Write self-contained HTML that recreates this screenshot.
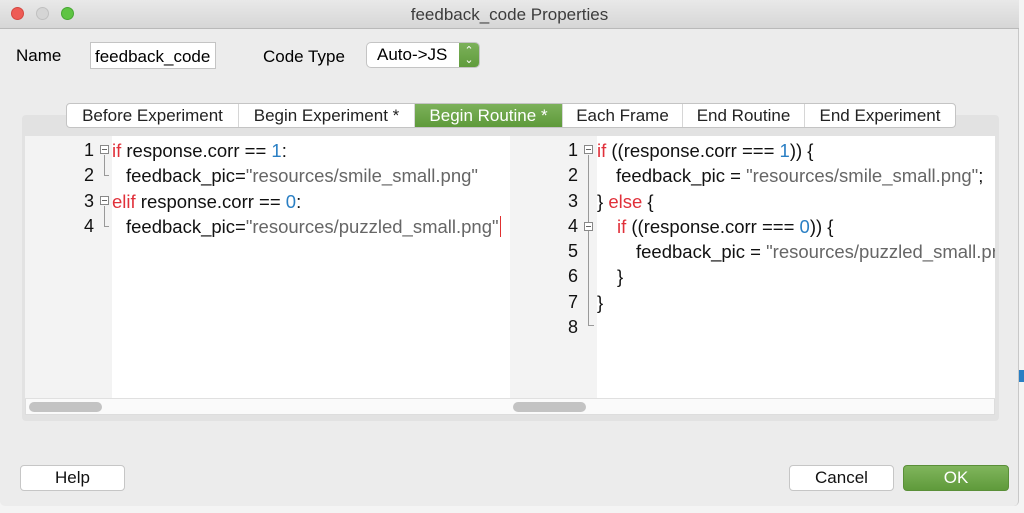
<!DOCTYPE html>
<html><head><meta charset="utf-8"><style>
*{margin:0;padding:0;box-sizing:border-box}
body{width:1024px;height:513px;overflow:hidden;background:#f4f4f4;font-family:"Liberation Sans",sans-serif;position:relative}
.win{position:absolute;left:0;top:0;width:1019px;height:506px;background:#ececec;border-radius:0 0 5px 5px;border-right:1px solid #c8c8c8}
.title{position:absolute;left:0;top:0;width:1019px;height:29px;background:linear-gradient(#e9e9e9,#d6d6d6);border-bottom:1px solid #b9b9b9;text-align:center;font-size:17px;line-height:30px;color:#3c3c3c}
.dot{position:absolute;top:7px;width:13px;height:13px;border-radius:50%}
.a{position:absolute;white-space:pre}
.tabs{position:absolute;left:66px;top:103px;height:25px;display:flex;border:1px solid #c4c4c4;border-radius:4px;background:#fff;overflow:hidden}
.tabs div{font-size:17px;line-height:23px;text-align:center;border-right:1px solid #d6d6d6;color:#222;flex:none}
.tabs div.on{background:linear-gradient(#7cb15a,#5e9a3a);color:#fff}
.code{position:absolute;white-space:nowrap;font-size:18.5px;line-height:25.3px;color:#111}
.code div{height:25.3px}
.k{color:#e0303a}.n{color:#2a7fc4}.s{color:#666}
.ln{position:absolute;font-size:18px;line-height:25.3px;text-align:right;width:20px;color:#111}
.btn{position:absolute;height:26px;background:#fff;border:1px solid #c6c6c6;border-radius:4px;font-size:17px;text-align:center;line-height:24px;color:#111}
.fold{position:absolute;width:9px;height:9px;border:1px solid #888;background:#fff}
.fold:after{content:"";position:absolute;left:1px;top:3px;width:5px;height:1px;background:#666}
.vl{position:absolute;width:1px;background:#999}
.hl{position:absolute;height:1px;background:#999}
</style></head><body>
<div class="win">
<div class="title">feedback_code Properties</div>
<div class="dot" style="left:11px;background:#ee5b55;border:1px solid #d44740"></div>
<div class="dot" style="left:36px;background:#d5d5d5;border:1px solid #c0c0c0"></div>
<div class="dot" style="left:61px;background:#5ec443;border:1px solid #47a733"></div>
<div class="a" style="left:16px;top:46px;font-size:17px">Name</div>
<div class="a" style="left:90px;top:42px;width:126px;height:27px;background:#fff;border:1px solid #c4c4c4;font-size:17px;line-height:27px;padding-left:4px;overflow:hidden">feedback_code</div>
<div class="a" style="left:263px;top:47px;font-size:17px">Code Type</div>
<div class="a" style="left:366px;top:42px;width:114px;height:26px;background:#fff;border:1px solid #c4c4c4;border-radius:5px;font-size:17px;line-height:24px;padding-left:10px;overflow:hidden">Auto-&gt;JS<div style="position:absolute;right:0;top:0;width:20px;height:26px;background:linear-gradient(#7cb15a,#5e9a3a);color:#fff;font-size:11px;line-height:9px;text-align:center;padding-top:4px">&#8963;<br>&#8964;</div></div>
<div style="position:absolute;left:22px;top:115px;width:977px;height:306px;background:#e2e2e2;border-radius:4px"></div>
<div style="position:absolute;left:25px;top:136px;width:970px;height:279px;background:#fafafa;border:1px solid #ddd"></div>
<div style="position:absolute;left:25px;top:136px;width:87px;height:262px;background:#f3f3f3"></div>
<div style="position:absolute;left:112px;top:136px;width:398px;height:262px;background:#fff"></div>
<div style="position:absolute;left:510px;top:136px;width:87px;height:262px;background:#f3f3f3"></div>
<div style="position:absolute;left:597px;top:136px;width:398px;height:262px;background:#fff"></div>
<div style="position:absolute;left:25px;top:398px;width:970px;height:1px;background:#e0e0e0"></div>
<div style="position:absolute;left:29px;top:402px;width:73px;height:10px;border-radius:5px;background:#c3c3c3"></div>
<div style="position:absolute;left:513px;top:402px;width:73px;height:10px;border-radius:5px;background:#c3c3c3"></div>
<div class="tabs"><div style="width:172px">Before Experiment</div><div style="width:176px">Begin Experiment *</div><div class="on" style="width:148px">Begin Routine *</div><div style="width:120px">Each Frame</div><div style="width:122px">End Routine</div><div style="border:none;width:150px">End Experiment</div></div>

<div class="ln" style="left:74px;top:138px">1<br>2<br>3<br>4</div>
<div class="fold" style="left:100px;top:145px"></div><div class="vl" style="left:104px;top:155px;height:20px"></div><div class="hl" style="left:104px;top:175px;width:5px"></div>
<div class="fold" style="left:100px;top:196px"></div><div class="vl" style="left:104px;top:206px;height:20px"></div><div class="hl" style="left:104px;top:226px;width:5px"></div>
<div class="code" style="left:112px;top:138px"><div><span class="k">if</span> response.corr == <span class="n">1</span>:</div><div style="padding-left:14px">feedback_pic=<span class="s">"resources/smile_small.png"</span></div><div><span class="k">elif</span> response.corr == <span class="n">0</span>:</div><div style="padding-left:14px">feedback_pic=<span class="s">"resources/puzzled_small.png"</span><span style="border-left:1px solid #e03030;margin-left:1px"></span></div></div>

<div class="ln" style="left:558px;top:138px">1<br>2<br>3<br>4<br>5<br>6<br>7<br>8</div>
<div class="fold" style="left:584px;top:145px"></div><div class="vl" style="left:588px;top:155px;height:170px"></div><div class="hl" style="left:588px;top:325px;width:6px"></div>
<div class="fold" style="left:584px;top:222px"></div>
<div style="position:absolute;left:597px;top:138px;width:398px;height:260px;overflow:hidden"><div class="code" style="left:0;top:0"><div><span class="k">if</span> ((response.corr === <span class="n">1</span>)) {</div><div style="padding-left:19px">feedback_pic = <span class="s">"resources/smile_small.png"</span>;</div><div>} <span class="k">else</span> {</div><div style="padding-left:20px"><span class="k">if</span> ((response.corr === <span class="n">0</span>)) {</div><div style="padding-left:39px">feedback_pic = <span class="s">"resources/puzzled_small.png"</span>;</div><div style="padding-left:20px">}</div><div>}</div></div></div>

<div class="btn" style="left:20px;top:465px;width:105px">Help</div>
<div class="btn" style="left:789px;top:465px;width:105px">Cancel</div>
<div class="btn" style="left:903px;top:465px;width:106px;background:linear-gradient(#80b55c,#5f9a3b);border-color:#5a8f38;color:#fff">OK</div>
</div>
<div style="position:absolute;left:1019px;top:370px;width:5px;height:12px;background:#2a7fc4"></div>
</body></html>
